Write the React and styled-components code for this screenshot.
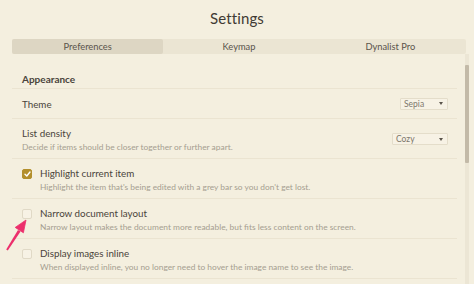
import React from 'react'
import styled, { createGlobalStyle } from 'styled-components'

const Global = createGlobalStyle`
  html, body {
    margin: 0;
    padding: 0;
    background: #f4efdf;
  }
  body {
    font-family: 'Lato', 'Open Sans', sans-serif;
  }
`

const Page = styled.div`
  position: relative;
  width: 474px;
  height: 284px;
  overflow: hidden;
  background: #f4efdf;
  display: flex;
  flex-direction: column;
`

const Title = styled.h1`
  margin: 7px 0 0;
  height: 22px;
  line-height: 22px;
  text-align: center;
  font-size: 15px;
  font-weight: 400;
  color: #3f3a33;
  letter-spacing: 0.1px;
`

const Tabs = styled.div`
  margin: 10px 8px 0 12px;
  height: 15px;
  display: grid;
  grid-template-columns: repeat(3, 1fr);
  background: #ebe5d3;
  border-radius: 2px;
`

const Tab = styled.div`
  display: flex;
  align-items: center;
  justify-content: center;
  font-size: 9.3px;
  color: #5a544b;
  background: ${({ active }) => (active ? '#ddd6c3' : 'transparent')};
  border-radius: 2px;
`

const Body = styled.div`
  flex: 1;
  display: flex;
  min-height: 0;
`

const Content = styled.div`
  flex: 1;
  padding: 14px 8px 0 12px;
`

const Scrollbar = styled.div`
  width: 4px;
  margin-right: 5px;
  background: #ece6d5;
  display: flex;
  flex-direction: column;
`

const Thumb = styled.div`
  margin-top: 11px;
  height: 98px;
  background: #c3baa8;
  border-radius: 1px;
`

const Section = styled.div`
  height: 20px;
  box-sizing: border-box;
  padding: 0 0 2px 10px;
  display: flex;
  align-items: flex-end;
  line-height: 14px;
  font-size: 10px;
  font-weight: 700;
  color: #4a443b;
  border-bottom: 1px solid #ebe4d1;
  box-sizing: content-box;
  height: 18px;
`

const Row = styled.div`
  display: flex;
  align-items: ${({ tall }) => (tall ? 'flex-start' : 'center')};
  height: ${({ tall }) => (tall ? '32px' : '29px')};
  padding: ${({ tall }) => (tall ? '7px 0 0 10px' : '0 0 0 10px')};
  border-bottom: 1px solid #ebe4d1;
`

const Text = styled.div`
  flex: 1;
  min-width: 0;
`

const Label = styled.div`
  font-size: 9.8px;
  line-height: 14px;
  color: #4a443b;
`

const Desc = styled.div`
  font-size: 8.4px;
  line-height: 14px;
  color: #a59e90;
  white-space: nowrap;
`

const Select = styled.div`
  width: ${({ w }) => w}px;
  height: 12px;
  box-sizing: border-box;
  margin: ${({ offset }) => offset || 0}px 9px 0 0;
  padding: 0 4px 0 3px;
  display: flex;
  align-items: center;
  justify-content: space-between;
  border: 1px solid #e4ddca;
  background: #f7f2e5;
  border-radius: 1px;
  font-size: 8.5px;
  color: #7d776b;

  &::after {
    content: '';
    border-left: 2px solid transparent;
    border-right: 2px solid transparent;
    border-top: 3px solid #5a544b;
  }
`

const Check = styled.div`
  width: 10px;
  height: 10px;
  box-sizing: border-box;
  margin: 3px 8px 0 0;
  flex-shrink: 0;
  border-radius: 2px;
  border: 1px solid ${({ on }) => (on ? '#b38f2c' : '#e0d9c6')};
  background: ${({ on }) => (on ? '#b38f2c' : '#f7f2e5')};
  display: flex;
  align-items: center;
  justify-content: center;
`

const Arrow = styled.svg`
  position: absolute;
  left: 0;
  top: 214px;
  width: 32px;
  height: 40px;
`

const tabs = ['Preferences', 'Keymap', 'Dynalist Pro']

const options = [
  {
    label: 'Highlight current item',
    desc: "Highlight the item that's being edited with a grey bar so you don't get lost.",
    on: true,
  },
  {
    label: 'Narrow document layout',
    desc: 'Narrow layout makes the document more readable, but fits less content on the screen.',
    on: false,
  },
  {
    label: 'Display images inline',
    desc: 'When displayed inline, you no longer need to hover the image name to see the image.',
    on: false,
  },
]

export default function App() {
  return (
    <Page>
      <Global />
      <Title>Settings</Title>
      <Tabs>
        {tabs.map((t, i) => (
          <Tab key={t} active={i === 0}>{t}</Tab>
        ))}
      </Tabs>
      <Body>
        <Content>
          <Section>Appearance</Section>
          <Row>
            <Text>
              <Label>Theme</Label>
            </Text>
            <Select w={48}>Sepia</Select>
          </Row>
          <Row tall>
            <Text>
              <Label>List density</Label>
              <Desc>Decide if items should be closer together or further apart.</Desc>
            </Text>
            <Select w={56} offset={7}>Cozy</Select>
          </Row>
          {options.map((o) => (
            <Row tall key={o.label}>
              <Check on={o.on}>
                {o.on && (
                  <svg width="7" height="6" viewBox="0 0 7 6">
                    <path d="M1 3.2 L2.8 5 L6 1" stroke="#fff" strokeWidth="1.4" fill="none" strokeLinecap="round" strokeLinejoin="round" />
                  </svg>
                )}
              </Check>
              <Text>
                <Label>{o.label}</Label>
                <Desc>{o.desc}</Desc>
              </Text>
            </Row>
          ))}
        </Content>
        <Scrollbar>
          <Thumb />
        </Scrollbar>
      </Body>
      <Arrow viewBox="0 0 32 40">
        <path d="M6.2 35.5 L7.8 36.5 L20.5 17.5 L18 16 Z" fill="#ec2f6c" />
        <path d="M26 6 L23.4 18.8 L15.2 13.4 Z" fill="#ec2f6c" stroke="#ec2f6c" strokeWidth="0.8" strokeLinejoin="round" />
      </Arrow>
    </Page>
  )
}
